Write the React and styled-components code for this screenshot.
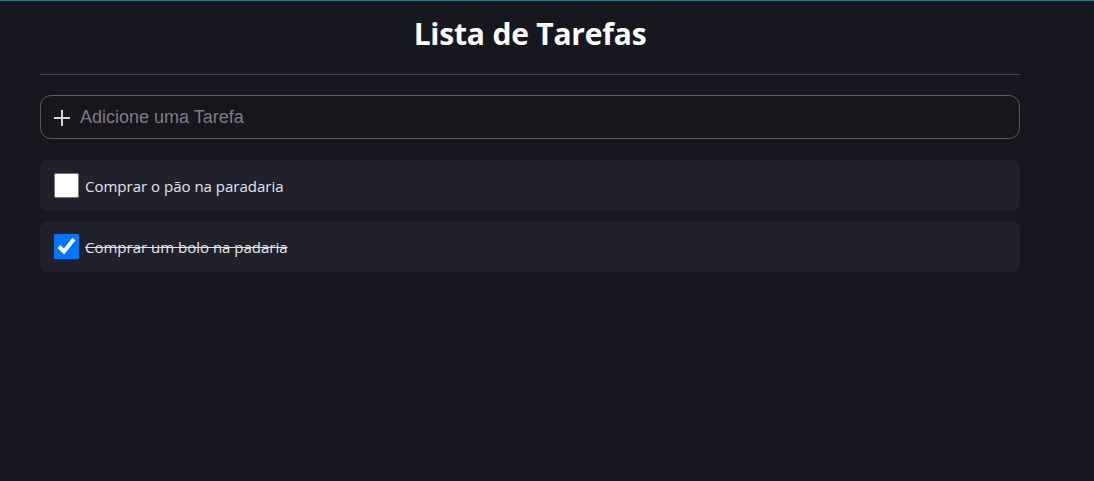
import { useState } from "react";
import styled, { createGlobalStyle } from "styled-components";

const GlobalStyle = createGlobalStyle`
  html, body {
    margin: 0;
    padding: 0;
    background: #17171f;
  }
  body {
    font-family: "Open Sans", "Noto Sans", sans-serif;
  }
`;

const Page = styled.div`
  min-height: 481px;
  box-sizing: border-box;
  border-top: 1px solid #2c7d84;
  background: #17171f;
`;

const Container = styled.main`
  width: 980px;
  margin-left: 40px;
  display: flex;
  flex-direction: column;
`;

const Title = styled.h1`
  margin: 0;
  padding: 14px 0 21px;
  text-align: center;
  font-size: 30px;
  line-height: 38px;
  font-weight: 700;
  color: #ffffff;
  border-bottom: 1px solid #45454b;
  letter-spacing: -0.2px;
`;

const InputBox = styled.label`
  margin-top: 20px;
  height: 44px;
  box-sizing: border-box;
  display: flex;
  align-items: center;
  gap: 9px;
  padding: 0 12px;
  border: 1px solid #5a5a60;
  border-radius: 11px;
  background: #16161d;
`;

const PlusSvg = styled.svg`
  flex: none;
  margin-top: 2px;
`;

const TaskInput = styled.input`
  flex: 1;
  border: none;
  outline: none;
  background: transparent;
  color: #e0e0e0;
  font-family: "Liberation Sans", Arial, sans-serif;
  font-size: 18px;
  padding: 0;

  &::placeholder {
    color: #7d7d84;
  }
`;

const List = styled.ul`
  list-style: none;
  margin: 21px 0 0;
  padding: 0;
  display: flex;
  flex-direction: column;
  gap: 10px;
`;

const Item = styled.li`
  height: 51px;
  box-sizing: border-box;
  display: flex;
  align-items: center;
  gap: 6px;
  padding: 0 14px;
  background: #21212c;
  border-radius: 8px;
`;

const Check = styled.input`
  width: 25px;
  height: 25px;
  margin: 0;
  accent-color: #0075ff;
`;

const Label = styled.span`
  font-family: "Open Sans", "Noto Sans", sans-serif;
  font-size: 15px;
  color: #e4e4e8;
  text-decoration: ${(p) => (p.$done ? "line-through" : "none")};
`;

const PlusIcon = () => (
  <PlusSvg width="18" height="18" viewBox="0 0 18 18">
    <path d="M9 1v16M1 9h16" stroke="#d4d4d4" strokeWidth="2" />
  </PlusSvg>
);

const App = () => {
  const [tasks, setTasks] = useState([
    { id: 1, text: "Comprar o pão na paradaria", done: false },
    { id: 2, text: "Comprar um bolo na padaria", done: true },
  ]);

  const toggle = (id) =>
    setTasks((t) => t.map((x) => (x.id === id ? { ...x, done: !x.done } : x)));

  return (
    <Page>
      <GlobalStyle />
      <Container>
        <Title>Lista de Tarefas</Title>
        <InputBox>
          <PlusIcon />
          <TaskInput placeholder="Adicione uma Tarefa" />
        </InputBox>
        <List>
          {tasks.map((task) => (
            <Item key={task.id}>
              <Check
                type="checkbox"
                checked={task.done}
                onChange={() => toggle(task.id)}
              />
              <Label $done={task.done}>{task.text}</Label>
            </Item>
          ))}
        </List>
      </Container>
    </Page>
  );
};

export default App;
